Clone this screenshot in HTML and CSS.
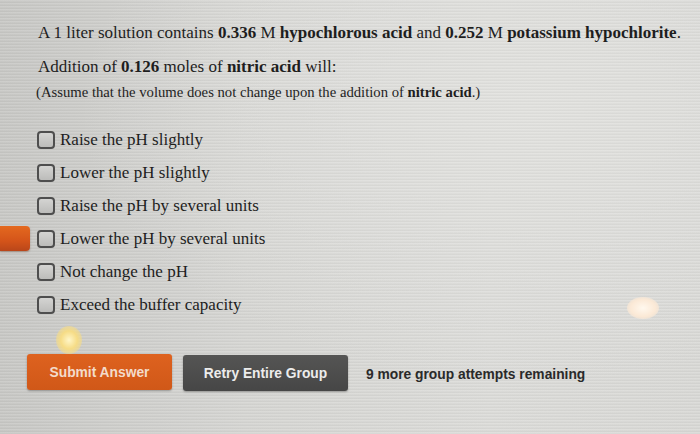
FILE: index.html
```html
<!DOCTYPE html>
<html>
    <head>
        <meta charset="UTF-8">
        <link rel="stylesheet" href="styles.css">
    </head>
    <body>
        <div id="question">
            <p class="intro">A 1 liter solution contains <b>0.336</b> M <b>hypochlorous acid</b> and <b>0.252</b> M <b>potassium hypochlorite</b>.</p>
            <p class="ask">Addition of <b>0.126</b> moles of <b>nitric acid</b> will:</p>
            <p class="note">(Assume that the volume does not change upon the addition of <b>nitric acid</b>.)</p>
        </div>

        <div id="choices">
            <label class="choice"><span class="marker"></span><span class="box"></span>Raise the pH slightly</label>
            <label class="choice"><span class="marker"></span><span class="box"></span>Lower the pH slightly</label>
            <label class="choice"><span class="marker"></span><span class="box"></span>Raise the pH by several units</label>
            <label class="choice"><span class="marker active"></span><span class="box"></span>Lower the pH by several units</label>
            <label class="choice"><span class="marker"></span><span class="box"></span>Not change the pH</label>
            <label class="choice"><span class="marker"></span><span class="box"></span>Exceed the buffer capacity</label>
        </div>

        <div id="actions">
            <button class="btn btnSubmit">Submit Answer</button>
            <button class="btn btnRetry">Retry Entire Group</button>
            <span class="attempts">9 more group attempts remaining</span>
        </div>

        <div class="glare glareLeft"></div>
        <div class="glare glareRight"></div>
    </body>
</html>
```

FILE: styles.css
```css
body {
    margin: 0;
    width: 700px;
    height: 434px;
    overflow: hidden;
    position: relative;
    font-family: "Liberation Serif", "Times New Roman", serif;
    color: #1e1e1e;
    background:
        repeating-linear-gradient(180deg, rgba(255,255,255,0.10) 0px, rgba(255,255,255,0.10) 1px, rgba(0,0,0,0.03) 2px, rgba(0,0,0,0.03) 3px),
        radial-gradient(ellipse at 75% 25%, #e2e2df 0%, rgba(226,226,223,0) 60%),
        linear-gradient(90deg, #c8c8c5 0%, #d6d6d3 35%, #dcdcd9 70%, #d9d9d6 100%);
}

#question {
    padding: 22px 0 0 38px;
}

#question p {
    margin: 0;
    white-space: nowrap;
}

.intro {
    font-size: 17px;
    line-height: 22px;
}

.ask {
    font-size: 17px;
    line-height: 22px;
    margin-top: 12px !important;
}

.note {
    font-size: 14.7px;
    line-height: 18px;
    margin-top: 5px !important;
    margin-left: -2px !important;
}

#choices {
    display: flex;
    flex-direction: column;
    margin-top: 22px;
}

.choice {
    display: flex;
    align-items: center;
    height: 33px;
    font-size: 17px;
}

.marker {
    width: 30px;
    height: 25px;
    margin-right: 7px;
}

.marker.active {
    background: linear-gradient(180deg, #e4691f 0%, #d4541a 60%, #b9461a 100%);
    border-radius: 0 4px 4px 0;
    box-shadow: 0 1px 2px rgba(80,30,0,0.35);
}

.box {
    width: 14px;
    height: 14px;
    border: 2px solid #4e4e4e;
    border-radius: 4px;
    background: linear-gradient(180deg, #d4d4d2 0%, #bcbcba 100%);
    margin-right: 5px;
}

#actions {
    display: flex;
    align-items: center;
    margin: 32px 0 0 27px;
}

.btn {
    font-family: "Liberation Sans", Arial, sans-serif;
    font-size: 13.8px;
    font-weight: 700;
    height: 36px;
    border: none;
    border-radius: 3px;
    padding: 0;
    box-shadow: 0 1px 2px rgba(0,0,0,0.3);
}

.btnSubmit {
    width: 145px;
    color: #f3dccb;
    background: linear-gradient(180deg, #de621f 0%, #d05818 100%);
}

.btnRetry {
    width: 165px;
    margin-left: 11px;
    margin-top: 2px;
    color: #ececec;
    background: linear-gradient(180deg, #555554 0%, #464646 100%);
}

.attempts {
    font-family: "Liberation Sans", Arial, sans-serif;
    font-size: 13.8px;
    font-weight: 700;
    color: #2a2a2a;
    margin-left: 18px;
    padding-top: 4px;
}

.glare {
    position: absolute;
    border-radius: 50%;
}

.glareLeft {
    left: 56px;
    top: 326px;
    width: 26px;
    height: 28px;
    background: radial-gradient(ellipse, #fff6c8 0%, #f6dc86 45%, rgba(240,210,120,0) 100%);
}

.glareRight {
    left: 627px;
    top: 297px;
    width: 32px;
    height: 22px;
    background: radial-gradient(ellipse, #fff8ee 0%, #fbe9d6 55%, rgba(245,225,205,0) 100%);
}
```
